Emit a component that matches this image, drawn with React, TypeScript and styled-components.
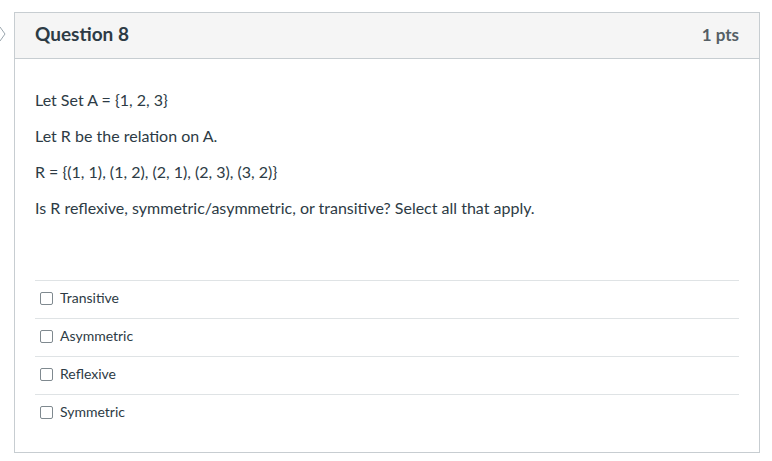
import React from 'react';
import styled, { createGlobalStyle } from 'styled-components';

const GlobalStyle = createGlobalStyle`
	html, body {
		margin: 0;
		padding: 0;
		background: #ffffff;
		font-family: Lato, 'Open Sans', sans-serif;
		color: #2d3b45;
	}
`;

const Page = styled.div`
	display: flex;
	align-items: flex-start;
	padding-top: 12px;
	width: 772px;
`;
const Nav = styled.div`
	width: 14px;
	padding-top: 14px;
	display: flex;
`;
const Card = styled.div`
	width: 746px;
	box-sizing: border-box;
	border: 1px solid #c7cdd1;
`;
const Header = styled.div`
	display: flex;
	align-items: center;
	justify-content: space-between;
	height: 45px;
	padding: 0 20px;
	background: #f5f5f5;
	border-bottom: 1px solid #c7cdd1;
`;
const Title = styled.h2`
	margin: 0;
	font-size: 19px;
	font-weight: 700;
	color: #2d3b45;
	padding-bottom: 4px;
`;
const Points = styled.span`
	font-size: 17px;
	font-weight: 700;
	color: #555f66;
	padding-bottom: 2px;
`;
const Body = styled.div`
	padding: 30px 20px 20px;
`;
const Text = styled.div`
	margin-bottom: 62px;
`;
const Para = styled.p`
	margin: 0 0 15px;
	font-size: 16px;
	line-height: 21px;
	&:last-child {
		margin-bottom: 0;
	}
`;
const Answers = styled.div`
	display: flex;
	flex-direction: column;
`;
const Answer = styled.label`
	display: flex;
	align-items: center;
	gap: 7px;
	box-sizing: border-box;
	height: 38px;
	padding: 0 5px 4px;
	border-top: 1px solid #dfe3e5;
	font-size: 14px;
	color: #2d3b45;
`;
const Box = styled.span`
	width: 11px;
	height: 11px;
	margin-top: 2px;
	border: 1px solid #7f898f;
	border-radius: 2px;
	background: #fff;
`;

const questions = [
	'Let Set A = {1, 2, 3}',
	'Let R be the relation on A.',
	'R = {(1, 1), (1, 2), (2, 1), (2, 3), (3, 2)}',
	'Is R reflexive, symmetric/asymmetric, or transitive? Select all that apply.',
];
const options = ['Transitive', 'Asymmetric', 'Reflexive', 'Symmetric'];

const App: React.FC = () => {
	return (
		<>
			<GlobalStyle />
			<Page>
				<Nav>
					<svg width="6" height="16" viewBox="0 0 6 16">
						<path d="M0 1 L5 8 L0 15" fill="none" stroke="#9aa6ae" strokeWidth="1" />
					</svg>
				</Nav>
				<Card>
					<Header>
						<Title>Question 8</Title>
						<Points>1 pts</Points>
					</Header>
					<Body>
						<Text>
							{questions.map((q) => (
								<Para key={q}>{q}</Para>
							))}
						</Text>
						<Answers>
							{options.map((o) => (
								<Answer key={o}>
									<Box />
									{o}
								</Answer>
							))}
						</Answers>
					</Body>
				</Card>
			</Page>
		</>
	);
};

export default App;
